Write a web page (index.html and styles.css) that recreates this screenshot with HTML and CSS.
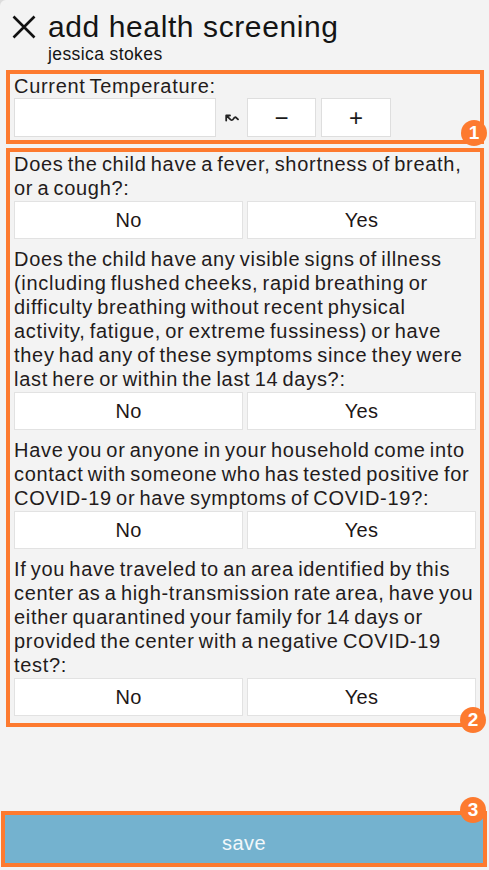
FILE: index.html
```html
<!DOCTYPE html>
<html lang="en">
<head>
<meta charset="utf-8">
<title>add health screening</title>
<link rel="stylesheet" href="styles.css">
</head>
<body>
<div class="app">
  <header class="header">
    <svg class="close" viewBox="0 0 24 24" width="24" height="24" aria-hidden="true">
      <path d="M1.5 1.5 L22.5 22.5 M22.5 1.5 L1.5 22.5" stroke="#111" stroke-width="2.6" fill="none"/>
    </svg>
    <div class="titles">
      <div class="title">add health screening</div>
      <div class="subtitle">jessica stokes</div>
    </div>
  </header>

  <section class="box box-temp">
    <div class="label">Current Temperature:</div>
    <div class="temp-row">
      <div class="temp-input"></div>
      <div class="unit">
        <svg viewBox="0 0 14 8" width="14" height="8" aria-hidden="true">
          <path d="M1.2 6.5 L1.2 1.5 L5 1.5 M1.4 1.7 L5.6 5.6 Q7.2 6.9 8.6 4.6 Q10 2.4 11.4 3.8 L13 5.4" stroke="#222" stroke-width="1.8" fill="none" stroke-linecap="round" stroke-linejoin="round"/>
        </svg>
      </div>
      <div class="step">−</div>
      <div class="step step-plus">+</div>
    </div>
    <span class="badge badge-1">1</span>
  </section>

  <section class="box box-questions">
    <div class="question">
      <div class="label">Does the child have a fever, shortness of breath, or a cough?:</div>
      <div class="choices"><div class="choice">No</div><div class="choice">Yes</div></div>
    </div>
    <div class="question">
      <div class="label">Does the child have any visible signs of illness (including flushed cheeks, rapid breathing or difficulty breathing without recent physical activity, fatigue, or extreme fussiness) or have they had any of these symptoms since they were last here or within the last 14 days?:</div>
      <div class="choices"><div class="choice">No</div><div class="choice">Yes</div></div>
    </div>
    <div class="question">
      <div class="label">Have you or anyone in your household come into contact with someone who has tested positive for COVID-19 or have symptoms of COVID-19?:</div>
      <div class="choices"><div class="choice">No</div><div class="choice">Yes</div></div>
    </div>
    <div class="question">
      <div class="label">If you have traveled to an area identified by this center as a high-transmission rate area, have you either quarantined your family for 14 days or provided the center with a negative COVID-19 test?:</div>
      <div class="choices"><div class="choice">No</div><div class="choice">Yes</div></div>
    </div>
    <span class="badge badge-2">2</span>
  </section>

  <div class="spacer"></div>

  <div class="save">
    save
    <span class="badge badge-3">3</span>
  </div>
</div>
</body>
</html>
```

FILE: styles.css
```css
html {
  background: #dcdcdc;
}
body {
  margin: 0;
  font-family: "Liberation Sans", Arial, sans-serif;
  color: #231b1b;
}
.app {
  min-height: 870px;
  background: #f3f3f3;
  border-top-left-radius: 6px;
  display: flex;
  flex-direction: column;
}
.header {
  display: flex;
  align-items: flex-start;
  gap: 12px;
  padding: 10px 0 0 12px;
}
.close {
  display: block;
  margin-top: 5px;
  flex: none;
}
.title {
  font-size: 30px;
  line-height: 34px;
  letter-spacing: 0.6px;
  color: #141414;
}
.subtitle {
  font-size: 17.5px;
  line-height: 20px;
  letter-spacing: 0.4px;
  color: #141414;
}
.box {
  position: relative;
  border: 4px solid #fd7a2f;
  margin: 0 5px 0 6px;
}
.box-temp {
  margin-top: 6px;
  padding: 0 4px 3px 4px;
}
.label {
  font-size: 20px;
  line-height: 24px;
  letter-spacing: 0.7px;
  word-spacing: -2px;
}
.temp-row {
  display: flex;
  height: 39px;
}
.temp-input {
  width: 200px;
  background: #fff;
  border: 1px solid #dedede;
}
.unit {
  width: 31px;
  display: flex;
  align-items: center;
  justify-content: center;
  padding-top: 1px;
}
.step {
  width: 67px;
  background: #fff;
  border: 1px solid #dedede;
  display: flex;
  align-items: center;
  justify-content: center;
  font-size: 24px;
  color: #1a1a1a;
}
.step-plus {
  width: 68px;
  margin-left: 5px;
}
.box-questions {
  margin-top: 4px;
  padding: 0 4px 7px 4px;
}
.question + .question {
  margin-top: 8px;
}
.choices {
  display: flex;
  gap: 4px;
  margin-top: 1px;
  height: 38px;
}
.choice {
  flex: 1;
  background: #fff;
  border: 1px solid #e2e2e2;
  display: flex;
  align-items: center;
  justify-content: center;
  font-size: 20px;
  letter-spacing: 0.3px;
  color: #1e1717;
}
.spacer {
  flex: 1;
}
.save {
  position: relative;
  height: 40px;
  margin: 0 2px 3px 1px;
  border: 4px solid #fd7a2f;
  background: #74b2cf;
  color: #f2f8fb;
  font-size: 20px;
  letter-spacing: 0.4px;
  display: flex;
  align-items: center;
  justify-content: center;
  padding-top: 8px;
  box-sizing: content-box;
}
.badge {
  position: absolute;
  width: 26px;
  height: 26px;
  border-radius: 50%;
  background: #fd7a2f;
  color: #fff;
  font-weight: bold;
  font-size: 19px;
  line-height: 26px;
  text-align: center;
  letter-spacing: 0;
  word-spacing: 0;
}
.badge-1 {
  right: -7px;
  bottom: -6px;
}
.badge-2 {
  right: -6px;
  bottom: -10px;
}
.badge-3 {
  right: -3px;
  top: -18px;
}
```
